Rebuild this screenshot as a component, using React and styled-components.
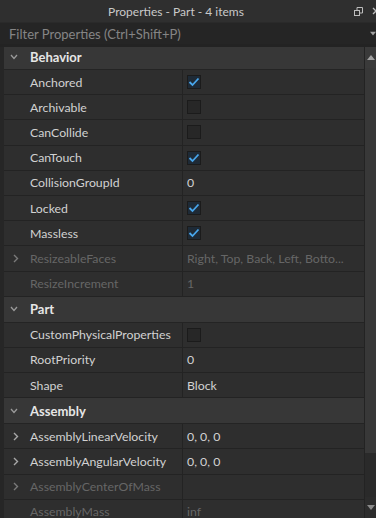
import React from 'react';
import styled, { createGlobalStyle } from 'styled-components';

const Global = createGlobalStyle`
  html, body { margin: 0; padding: 0; background: #2e2e2e; }
  body { font-family: Lato, "Noto Sans", sans-serif; -webkit-font-smoothing: antialiased; }
  * { box-sizing: border-box; }
`;

const Panel = styled.div`
  width: 376px;
  height: 518px;
  overflow: hidden;
  display: flex;
  flex-direction: column;
  background: #2e2e2e;
`;

const TitleBar = styled.div`
  height: 22px;
  flex: none;
  display: flex;
  align-items: center;
  background: #2f2f2f;
  color: #c9c9c9;
  font-size: 12px;
`;

const Title = styled.div`
  flex: 1;
  text-align: center;
  white-space: nowrap;
`;

const TitleIcons = styled.div`
  width: 24px;
  flex: none;
  display: flex;
  align-items: center;
  gap: 9px;
  padding-left: 2px;
  overflow: hidden;
`;

const FilterBar = styled.div`
  height: 22px;
  flex: none;
  display: flex;
  align-items: center;
  background: #252525;
  border-top: 1px solid #2a2a2a;
  color: #858585;
  font-size: 13px;
  padding-left: 9px;
`;

const FilterText = styled.div`
  flex: 1;
  white-space: nowrap;
`;

const Divider = styled.div`
  height: 3px;
  flex: none;
  background: #232323;
`;

const Body = styled.div`
  flex: 1;
  min-height: 0;
  display: flex;
`;

const List = styled.div`
  flex: 1;
  min-width: 0;
  overflow: hidden;
  border-left: 4px solid #262626;
`;

const ListInner = styled.div`
  margin-top: -3px;
`;

const Header = styled.div`
  height: 26px;
  display: flex;
  align-items: center;
  background: #373737;
  border-bottom: 1px solid #242424;
  padding-left: 6px;
  color: #e6e6e6;
  font-weight: 700;
  font-size: 13px;
`;

const Row = styled.div`
  height: 25.2px;
  display: flex;
  align-items: stretch;
  background: #2e2e2e;
  border-bottom: 1px solid #232323;
  font-size: 12.3px;
  color: ${p => (p.$disabled ? '#666666' : '#d2d2d2')};
`;

const NameCell = styled.div`
  width: 179px;
  flex: none;
  display: flex;
  align-items: center;
  padding-left: 9px;
  border-right: 1px solid #232323;
  white-space: nowrap;
  overflow: hidden;
`;

const ChevronSlot = styled.div`
  width: ${p => p.$w}px;
  flex: none;
  display: flex;
  align-items: center;
`;

const ValueCell = styled.div`
  flex: 1;
  min-width: 0;
  display: flex;
  align-items: center;
  padding-left: 4px;
  white-space: nowrap;
  overflow: hidden;
  text-overflow: ellipsis;
`;

const Box = styled.div`
  width: 14px;
  height: 14px;
  border: 1px solid #1b1b1b;
  background: ${p => (p.$checked ? '#1e2a36' : '#272727')};
  display: flex;
  align-items: center;
  justify-content: center;
`;

const Scrollbar = styled.div`
  width: 12px;
  flex: none;
  display: flex;
  flex-direction: column;
  border-left: 1px solid #232323;
  background: #2a2a2a;
`;

const ScrollButton = styled.div`
  height: 21px;
  flex: none;
  display: flex;
  align-items: center;
  justify-content: center;
  background: ${p => (p.$light ? '#3a3a3a' : '#2c2c2c')};
`;

const Thumb = styled.div`
  height: 385px;
  flex: none;
  background: #383838;
`;

const Track = styled.div`
  flex: 1;
  background: #2a2a2a;
`;

const RightChevron = ({ color }) => (
  <svg width="6" height="9" viewBox="0 0 6 9">
    <polyline points="1,1 4.5,4.5 1,8" fill="none" stroke={color} strokeWidth="1.4" />
  </svg>
);

const DownChevron = () => (
  <svg width="8" height="6" viewBox="0 0 8 6">
    <polyline points="1,1 4,4.5 7,1" fill="none" stroke="#9a9a9a" strokeWidth="1.3" />
  </svg>
);

const Check = () => (
  <svg width="12" height="10" viewBox="0 0 12 10">
    <polyline points="1.5,5 4.5,8 10.5,1.5" fill="none" stroke="#48a6ec" strokeWidth="1.8" />
  </svg>
);

const Checkbox = ({ checked }) => <Box $checked={checked}>{checked && <Check />}</Box>;

const sections = [
  {
    name: 'Behavior',
    rows: [
      { n: 'Anchored', c: true },
      { n: 'Archivable', c: false },
      { n: 'CanCollide', c: false },
      { n: 'CanTouch', c: true },
      { n: 'CollisionGroupId', v: '0' },
      { n: 'Locked', c: true },
      { n: 'Massless', c: true },
      { n: 'ResizeableFaces', v: 'Right, Top, Back, Left, Botto...', d: true, e: true },
      { n: 'ResizeIncrement', v: '1', d: true },
    ],
  },
  {
    name: 'Part',
    rows: [
      { n: 'CustomPhysicalProperties', c: false },
      { n: 'RootPriority', v: '0' },
      { n: 'Shape', v: 'Block' },
    ],
  },
  {
    name: 'Assembly',
    rows: [
      { n: 'AssemblyLinearVelocity', v: '0, 0, 0', e: true },
      { n: 'AssemblyAngularVelocity', v: '0, 0, 0', e: true },
      { n: 'AssemblyCenterOfMass', v: '', d: true, e: true },
      { n: 'AssemblyMass', v: 'inf', d: true },
    ],
  },
];

export default function App() {
  return (
    <>
      <Global />
      <Panel>
        <TitleBar>
          <Title>Properties - Part - 4 items</Title>
          <TitleIcons>
            <svg width="9" height="9" viewBox="0 0 9 9" style={{ flex: 'none' }}>
              <rect x="0.5" y="3.5" width="5" height="5" fill="none" stroke="#bdbdbd" />
              <polyline points="3,3.5 3,0.5 8.5,0.5 8.5,6 5.5,6" fill="none" stroke="#bdbdbd" />
            </svg>
            <svg width="8" height="8" viewBox="0 0 8 8" style={{ flex: 'none' }}>
              <path d="M1 1 L7 7 M7 1 L1 7" stroke="#bdbdbd" strokeWidth="1.3" />
            </svg>
          </TitleIcons>
        </TitleBar>
        <FilterBar>
          <FilterText>Filter Properties (Ctrl+Shift+P)</FilterText>
          <svg width="6" height="5" viewBox="0 0 8 5" style={{ flex: 'none' }}>
            <polygon points="0,0 8,0 4,5" fill="#a0a0a0" />
          </svg>
        </FilterBar>
        <Divider />
        <Body>
          <List>
            <ListInner>
              {sections.map(s => (
                <React.Fragment key={s.name}>
                  <Header>
                    <ChevronSlot $w={20}>
                      <DownChevron />
                    </ChevronSlot>
                    {s.name}
                  </Header>
                  {s.rows.map(r => (
                    <Row key={r.n} $disabled={r.d}>
                      <NameCell>
                        <ChevronSlot $w={17}>
                          {r.e && <RightChevron color={r.d ? '#7a7a7a' : '#a8a8a8'} />}
                        </ChevronSlot>
                        {r.n}
                      </NameCell>
                      <ValueCell>
                        {r.c !== undefined ? <Checkbox checked={r.c} /> : r.v}
                      </ValueCell>
                    </Row>
                  ))}
                </React.Fragment>
              ))}
            </ListInner>
          </List>
          <Scrollbar>
            <ScrollButton $light>
              <svg width="8" height="5" viewBox="0 0 8 5">
                <polygon points="0,5 8,5 4,0" fill="#a0a0a0" />
              </svg>
            </ScrollButton>
            <Thumb />
            <Track />
            <ScrollButton>
              <svg width="8" height="5" viewBox="0 0 8 5">
                <polygon points="0,0 8,0 4,5" fill="#8a8a8a" />
              </svg>
            </ScrollButton>
          </Scrollbar>
        </Body>
      </Panel>
    </>
  );
}
